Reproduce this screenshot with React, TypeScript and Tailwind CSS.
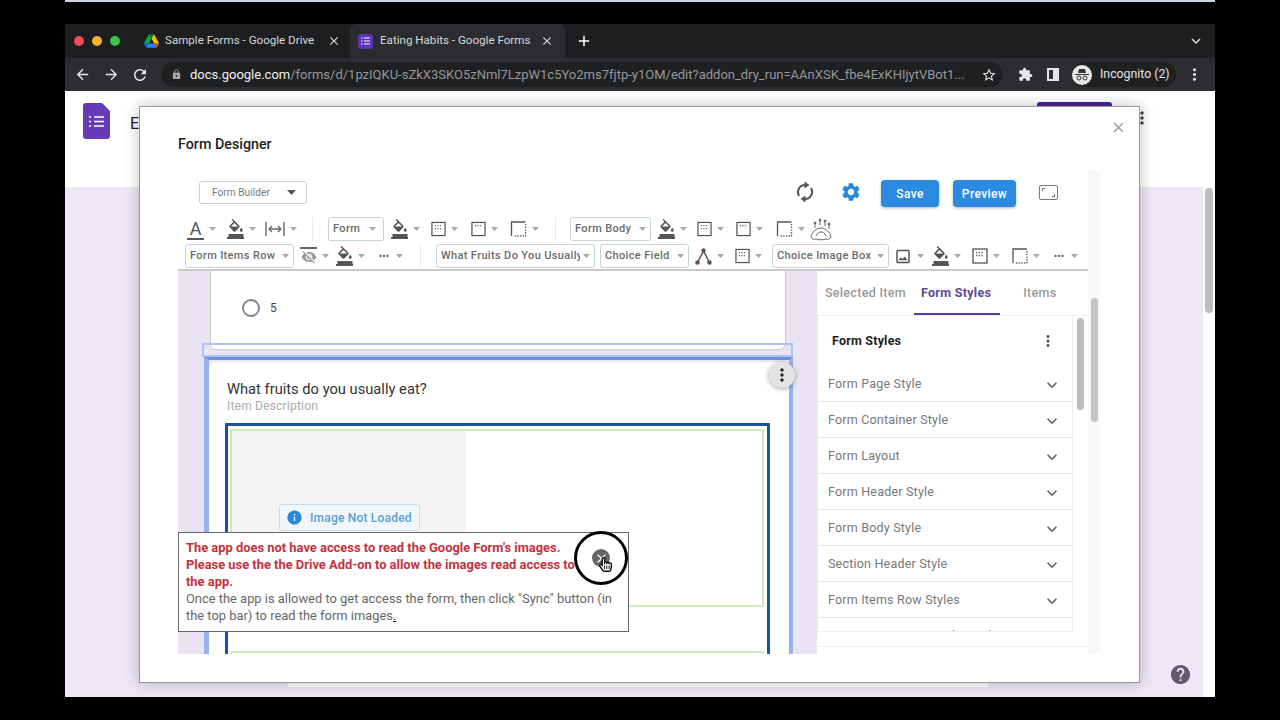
import React from "react";
import {
  MdSettings, MdExpandMore, MdMoreVert, MdExtension, MdStarBorder, MdArrowBack, MdArrowForward,
  MdRefresh, MdLock, MdClose, MdAdd, MdInfo, MdHelp, MdFormatColorFill, MdMoreHoriz, MdVisibilityOff, MdOutlineImage,
} from "react-icons/md";
import { FaHandPointer, FaRegHandPointer } from "react-icons/fa";

const Caret = () => (
  <svg width="7" height="4" viewBox="0 0 7 4" className="ml-[5px] shrink-0"><path d="M0 0h7L3.5 4z" fill="#a8a8a8" /></svg>
);

const Bucket = ({ bar = true }: { bar?: boolean }) => (
  <span className="flex w-[17px] flex-col items-center shrink-0">
    <MdFormatColorFill size={18} color="#555" className="-mt-[1px]" />
    {bar && <span className="h-[2px] w-[17px] bg-[#555]" />}
  </span>
);

const Grid = ({ kind, w = 15 }: { kind: "all" | "top" | "corner"; w?: number }) => (
  <svg width={w} height="16" viewBox="0 0 16 16" className="shrink-0">
    {kind === "corner" ? (
      <>
        <path d="M1 15V1h14" fill="none" stroke="#555" strokeWidth="1.3" />
        <path d="M15 3v12H3" fill="none" stroke="#555" strokeWidth="1.3" strokeDasharray="1.3 1.4" />
      </>
    ) : (
      <>
        <rect x="1" y="1" width="14" height="14" fill="none" stroke="#555" strokeWidth="1.3" />
        <path d="M4 4.5h8" stroke="#666" strokeWidth="1.3" strokeDasharray="1.3 1.4" />
        {kind === "all" && <path d="M4 7.5h8" stroke="#666" strokeWidth="1.3" strokeDasharray="1.3 1.4" />}
      </>
    )}
  </svg>
);

const Dots = () => <MdMoreHoriz size={18} color="#666" className="w-[14px] shrink-0" />;

const Select = ({ label, className }: { label: string; className: string }) => (
  <div className={"flex h-[24px] shrink-0 items-center justify-between rounded-[3px] border border-[#c5d5d5] pl-[4px] " + className}>
    <span className="overflow-hidden whitespace-nowrap text-[11px] font-medium tracking-[0.35px] text-[#6b6b6b]">{label}</span>
    <svg width="7" height="4" viewBox="0 0 7 4" className="ml-[3px] shrink-0"><path d="M0 0h7L3.5 4z" fill="#a8a8a8" /></svg>
  </div>
);

const Divider = ({ className }: { className: string }) => <span className={"h-[24px] w-px shrink-0 bg-[#e8e8e8] " + className} />;

const styles = [
  "Form Page Style",
  "Form Container Style",
  "Form Layout",
  "Form Header Style",
  "Form Body Style",
  "Section Header Style",
  "Form Items Row Styles",
  "Form Items Row Header Style",
];

export default function App() {
  return (
    <div className="relative h-[720px] w-[1280px] overflow-hidden bg-black" style={{ fontFamily: "Roboto, 'Liberation Sans', sans-serif" }}>
      <div className="mx-[65px] h-[2px] bg-[#cdd6e2]" />
      <div className="ml-[65px] mt-[22px] flex h-[673px] w-[1150px] flex-col">
        {/* Tab strip */}
        <div className="flex h-[34px] items-center bg-[#1d1e20] text-[#d8d9db]">
          <span className="ml-[9px] h-[10px] w-[10px] rounded-full bg-[#ee4c56]" />
          <span className="ml-[8px] h-[10px] w-[10px] rounded-full bg-[#f2b135]" />
          <span className="ml-[8px] h-[10px] w-[10px] rounded-full bg-[#35c54a]" />
          <div className="ml-[24px] flex h-full w-[206px] items-center">
            <svg width="15" height="14" viewBox="0 0 87.3 78" className="shrink-0">
              <path d="m6.6 66.85 3.85 6.65c.8 1.4 1.95 2.5 3.3 3.3l13.75-23.8h-27.5c0 1.55.4 3.1 1.2 4.5z" fill="#0066da" />
              <path d="m43.65 25-13.75-23.8c-1.35.8-2.5 1.9-3.3 3.3l-25.4 44a9.06 9.06 0 0 0-1.2 4.5h27.5z" fill="#00ac47" />
              <path d="m73.55 76.8c1.35-.8 2.5-1.9 3.3-3.3l1.6-2.75 7.65-13.25c.8-1.4 1.2-2.95 1.2-4.5h-27.5l5.85 11.5z" fill="#ea4335" />
              <path d="m43.65 25 13.75-23.8c-1.35-.8-2.9-1.2-4.5-1.2h-18.5c-1.6 0-3.15.45-4.5 1.2z" fill="#00832d" />
              <path d="m59.8 53h-32.3l-13.75 23.8c1.35.8 2.9 1.2 4.5 1.2h50.8c1.6 0 3.15-.45 4.5-1.2z" fill="#2684fc" />
              <path d="m73.4 26.5-12.7-22c-.8-1.4-1.95-2.5-3.3-3.3l-13.75 23.8 16.15 28h27.45c0-1.55-.4-3.1-1.2-4.5z" fill="#ffba00" />
            </svg>
            <span className="ml-[6px] w-[150px] whitespace-nowrap text-[11.6px]">Sample Forms - Google Drive</span>
            <MdClose size={14} className="ml-[12px]" />
          </div>
          <div className="flex h-[34px] w-[215px] items-center rounded-t-[6px] bg-[#2b2c2f]">
            <span className="ml-[8px] flex h-[15px] w-[15px] items-center justify-center rounded-[3px] bg-[#5c35b5]">
              <svg width="9" height="8" viewBox="0 0 9 8"><path d="M0 1h1.5M3 1h6M0 4h1.5M3 4h6M0 7h1.5M3 7h6" stroke="#fff" strokeWidth="1.2" /></svg>
            </span>
            <span className="ml-[7px] w-[151px] whitespace-nowrap text-[11.6px]">Eating Habits - Google Forms</span>
            <MdClose size={14} className="ml-[9px]" />
          </div>
          <MdAdd size={18} color="#fff" className="ml-[10px]" />
          <MdExpandMore size={18} color="#d8d9db" className="ml-auto mr-[10px]" />
        </div>
        {/* Address bar */}
        <div className="flex h-[33px] items-center bg-[#2c2d30] text-[#e4e5e7]">
          <MdArrowBack size={17} className="ml-[9px]" />
          <MdArrowForward size={17} className="ml-[12px]" />
          <MdRefresh size={18} className="ml-[11px]" />
          <div className="ml-[12px] flex h-[25px] w-[842px] items-center rounded-full bg-[#1f2022]">
            <MdLock size={11} color="#a8a9ab" className="ml-[10px]" />
            <span className="ml-[8px] w-[775px] overflow-hidden whitespace-nowrap text-[13px]">
              <span className="text-[#f0f0f0]">docs.google.com</span>
              <span className="text-[#96989b]">/forms/d/1pzIQKU-sZkX3SKO5zNml7LzpW1c5Yo2ms7fjtp-y1OM/edit?addon_dry_run=AAnXSK_fbe4ExKHIjytVBot1...</span>
            </span>
            <MdStarBorder size={16} className="ml-[16px] text-[#e4e5e7]" />
          </div>
          <MdExtension size={15} className="ml-[15px]" />
          <span className="ml-[14px] flex h-[13px] w-[12px] items-center justify-end border-2 border-[#e4e5e7]"><span className="h-full w-[4px] bg-[#e4e5e7]" /></span>
          <div className="ml-[13px] flex h-[25px] w-[104px] items-center rounded-full bg-[#1f2022]">
            <span className="flex h-[20px] w-[20px] items-center justify-center rounded-full bg-[#e8e8e8]">
              <svg width="14" height="12" viewBox="0 0 14 12"><path d="M4 0h6l1 4H3zM0 5h14v1H0z" fill="#333" /><circle cx="4" cy="9" r="2" fill="none" stroke="#333" /><circle cx="10" cy="9" r="2" fill="none" stroke="#333" /></svg>
            </span>
            <span className="ml-[8px] whitespace-nowrap text-[12.3px]">Incognito (2)</span>
          </div>
          <MdMoreVert size={19} className="ml-[9px]" />
        </div>
        {/* Page */}
        <div className="relative flex flex-1 bg-[#ede7f6]">
          <div className="flex-1">
            <div className="relative h-[96px] bg-white">
              <svg width="27" height="36" viewBox="0 0 27 36" className="absolute left-[18px] top-[12px]">
                <path d="M3 0h16l8 8v25a3 3 0 0 1-3 3H3a3 3 0 0 1-3-3V3a3 3 0 0 1 3-3z" fill="#673ab7" />
                <path d="M6 14h2M11 14h10M6 18.5h2M11 18.5h10M6 23h2M11 23h10" stroke="#fff" strokeWidth="1.6" />
              </svg>
              <span className="absolute left-[65px] top-[21px] text-[16px] text-[#222]">E</span>
              <div className="absolute left-[972px] top-[11px] h-[10px] w-[75px] rounded-t-[3px] bg-[#4a2596]" />
              <MdMoreVert size={20} color="#444" className="absolute left-[1067px] top-[17px]" />
            </div>
            <div className="absolute bottom-[10px] left-[223px] h-[6px] w-[700px] bg-white" />
            <MdHelp size={23} color="#5f5b6b" className="absolute left-[1104px] top-[572px]" />
          </div>
          <div className="w-[12px] bg-white pl-[2px] pt-[97px]">
            <div className="h-[125px] w-[8px] rounded-full bg-[#bdbdbd]" />
          </div>

          {/* Modal */}
          <div className="absolute left-[74px] top-[15px] flex h-[577px] w-[1001px] flex-col border border-[#9a9a9a] bg-white pl-[38px] shadow-[0_0_14px_rgba(0,0,0,0.25)]">
            <MdClose size={17} color="#9a9a9a" className="absolute right-[12px] top-[12px]" />
            <div className="mt-[27px] h-[20px] text-[14.3px] font-medium leading-[20px] text-[#222]">Form Designer</div>
            <div className="mt-[16px] flex h-[484px]">
              <div className="flex w-[910px] flex-col">
                {/* Toolbar */}
                <div className="h-[101px] shrink-0 border-b-2 border-[#c9c9c9]">
                  <div className="flex h-[47px] items-start pt-[11px]">
                    <div className="ml-[21px] flex h-[23px] w-[108px] items-center rounded-[3px] border border-[#c9cfcf] pl-[12px]">
                      <span className="text-[10px] tracking-[0.1px] text-[#777]">Form Builder</span>
                      <svg width="9" height="5" viewBox="0 0 9 5" className="ml-[17px]"><path d="M0 0h9L4.5 5z" fill="#555" /></svg>
                    </div>
                    <svg width="20" height="22" viewBox="0 0 20 22" className="ml-[488px] shrink-0" fill="none" stroke="#555" strokeWidth="2">
                      <path d="M10 4a7.2 7.2 0 0 0-6 11" />
                      <path d="M10 18a7.2 7.2 0 0 0 6-11" />
                      <path d="M9.5 0.5l5 3.5-5 3.5zM10.5 14.5l-5 3.5 5 3.5z" fill="#555" stroke="none" />
                    </svg>
                    <MdSettings size={22} color="#2a87d8" className="ml-[25px]" />
                    <button className="ml-[19px] -mt-[1px] h-[27px] w-[58px] rounded-[4px] bg-[#2a8be0] text-[12px] font-medium tracking-[0.4px] text-white shadow-[0_1px_3px_rgba(0,0,0,0.3)]">Save</button>
                    <button className="ml-[14px] -mt-[1px] h-[27px] w-[63px] rounded-[4px] bg-[#2a8be0] text-[12px] font-medium tracking-[0.4px] text-white shadow-[0_1px_3px_rgba(0,0,0,0.3)]">Preview</button>
                    <span className="ml-[23px] mt-[4px] flex h-[15px] w-[19px] items-center justify-center rounded-[2px] border border-[#777]">
                      <svg width="13" height="9" viewBox="0 0 13 9"><path d="M.5 3V.5H3M12.5 6v2.5H10" fill="none" stroke="#777" /></svg>
                    </span>
                  </div>
                  <div className="flex h-[24px] items-center pl-[9px]">
                    <span className="flex w-[17px] shrink-0 flex-col items-center">
                      <span className="text-[18px] font-normal leading-[19px] text-[#555]">A</span>
                      <span className="h-[2px] w-[17px] bg-[#555]" />
                    </span>
                    <Caret />
                    <span className="ml-[11px]"><Bucket /></span>
                    <Caret />
                    <span className="ml-[9px] flex w-[20px] shrink-0 items-center justify-between text-[#666]">
                      <svg width="20" height="14" viewBox="0 0 20 14"><path d="M1 0v14M19 0v14M4 7h12M4 7l3-3M4 7l3 3M16 7l-3-3M16 7l-3 3" fill="none" stroke="#666" strokeWidth="1.4" /></svg>
                    </span>
                    <Caret />
                    <Divider className="ml-[15px]" />
                    <Select label="Form" className="ml-[15px] w-[56px] pr-[7px]" />
                    <span className="ml-[7px]"><Bucket /></span>
                    <Caret />
                    <span className="ml-[11px]"><Grid kind="all" /></span>
                    <Caret />
                    <span className="ml-[13px]"><Grid kind="top" /></span>
                    <Caret />
                    <span className="ml-[12px]"><Grid kind="corner" w={17} /></span>
                    <Caret />
                    <Divider className="ml-[16px]" />
                    <Select label="Form Body" className="ml-[14px] w-[81px] pr-[4px]" />
                    <span className="ml-[7px]"><Bucket /></span>
                    <Caret />
                    <span className="ml-[10px]"><Grid kind="all" /></span>
                    <Caret />
                    <span className="ml-[12px]"><Grid kind="top" /></span>
                    <Caret />
                    <span className="ml-[13px]"><Grid kind="corner" w={17} /></span>
                    <Caret />
                    <svg width="22" height="24" viewBox="0 0 22 24" className="ml-[5px] shrink-0" fill="none" stroke="#666" strokeWidth="1">
                      <path d="M1 20c1-5 5-9 10-9s9 4 10 9c-1 2-3 3-5 2-3 1-7 1-10 0-2 1-4 0-5-2z" />
                      <path d="M6 19c1-3 3-4 5-4s4 1 5 4M5 11V6M10 8V2M15 9V3M19 12V6" />
                      <circle cx="5" cy="6" r="1" fill="#666" /><circle cx="10" cy="3" r="1" fill="#666" /><circle cx="15" cy="4" r="1" fill="#666" /><circle cx="19" cy="7" r="1" fill="#666" />
                    </svg>
                  </div>
                  <div className="mt-[3px] flex h-[24px] items-center pl-[7px]">
                    <Select label="Form Items Row" className="w-[109px] pr-[4px]" />
                    <span className="ml-[6px] flex w-[17px] shrink-0 flex-col items-center">
                      <span className="h-[2px] w-[17px] bg-[#666]" />
                      <MdVisibilityOff size={16} color="#999" />
                    </span>
                    <Caret />
                    <span className="ml-[7px]"><Bucket /></span>
                    <Caret />
                    <span className="ml-[12px]"><Dots /></span>
                    <Caret />
                    <Divider className="ml-[17px]" />
                    <Select label="What Fruits Do You Usually" className="ml-[15px] w-[159px] pr-[4px]" />
                    <Select label="Choice Field" className="ml-[5px] w-[89px] pr-[4px]" />
                    <svg width="17" height="17" viewBox="0 0 17 17" className="ml-[6px] shrink-0">
                      <path d="M2.5 14.5L8.5 3l6 11.5" fill="none" stroke="#555" strokeWidth="1.5" />
                      <circle cx="2.5" cy="14.5" r="2.2" fill="#555" /><circle cx="8.5" cy="2.5" r="2.2" fill="#555" /><circle cx="14.5" cy="14.5" r="2.2" fill="#555" />
                    </svg>
                    <Caret />
                    <span className="ml-[11px]"><Grid kind="all" /></span>
                    <Caret />
                    <Select label="Choice Image Box" className="ml-[10px] w-[117px] pr-[4px]" />
                    <MdOutlineImage size={19} color="#555" className="ml-[5px] w-[18px] shrink-0" />
                    <Caret />
                    <span className="ml-[8px]"><Bucket /></span>
                    <Caret />
                    <span className="ml-[11px]"><Grid kind="all" w={16} /></span>
                    <Caret />
                    <span className="ml-[12px]"><Grid kind="corner" w={16} /></span>
                    <Caret />
                    <span className="ml-[12px]"><Dots /></span>
                    <Caret />
                  </div>
                </div>
                {/* Main */}
                <div className="flex min-h-0 flex-1">
                  <div className="w-[639px] overflow-hidden bg-[#e9e3f3] pl-[32px]">
                    <div className="flex h-[72px] w-[576px] items-center border-x border-[#c9c9c9] bg-white pl-[31px] pt-[2px]">
                      <span className="h-[18px] w-[18px] rounded-full border-2 border-[#888]" />
                      <span className="ml-[10px] text-[12px] text-[#444]">5</span>
                    </div>
                    <div className="-ml-[8px] h-[14px] w-[591px] border-2 border-[#a9c4f5] px-[6px]">
                      <div className="h-[5px] rounded-b-[5px] border-x border-b border-[#c9c9c9] bg-white" />
                    </div>
                    <div className="-ml-[6px] w-[589px] border-l-[5px] border-r-[4px] border-t-[3px] border-[#94b3ee] border-t-[#6b90de] pt-[2px]">
                      <div className="relative h-[292px] rounded-t-[6px] bg-white pl-[18px]">
                        <span className="absolute -right-[6px] top-0 flex h-[26px] w-[26px] items-center justify-center rounded-full bg-[#e3e3e3] shadow-[0_1px_5px_rgba(0,0,0,0.35)]">
                          <MdMoreVert size={20} color="#222" />
                        </span>
                        <div className="pt-[17px] text-[14.7px] leading-[20px] text-[#333]">What fruits do you usually eat?</div>
                        <div className="text-[12px] leading-[14px] tracking-[0.2px] text-[#aaa]">Item Description</div>
                        <div className="ml-[-2px] mt-[10px] h-[240px] w-[545px] border-x-[3px] border-t-[3px] border-[#1c52a6] pl-[2px] pr-[3px] pt-[3px]">
                          <div className="flex h-[178px] border-2 border-[#cdeabf]">
                            <div className="h-full w-[234px] bg-[#f3f3f3] pl-[47px] pt-[73px]">
                              <div className="flex h-[27px] w-[141px] items-center rounded-[3px] border border-[#c6dceb] bg-[#f1f6fa] pl-[6px]">
                                <MdInfo size={17} color="#2a87e0" />
                                <span className="ml-[7px] text-[12px] font-medium tracking-[0.2px] text-[#5aa0d0]">Image Not Loaded</span>
                              </div>
                            </div>
                          </div>
                          <div className="mt-[44px] h-[10px] border-x-2 border-t-2 border-[#cdeabf]" />
                        </div>
                      </div>
                    </div>
                  </div>
                  {/* Right panel */}
                  <div className="flex w-[271px] flex-col bg-white">
                    <div className="relative flex h-[45px] shrink-0 items-center border-b border-[#eeeeee] text-[12.5px] font-medium tracking-[0.3px]">
                      <span className="ml-[8px] whitespace-nowrap text-[#999]">Selected Item</span>
                      <span className="ml-[15px] whitespace-nowrap font-bold text-[#5e4a96]">Form Styles</span>
                      <span className="ml-[32px] text-[#999]">Items</span>
                      <span className="absolute bottom-0 left-[97px] h-[2px] w-[86px] bg-[#5b3aa0]" />
                    </div>
                    <div className="flex h-[331px] shrink-0 border-b border-[#eeeeee]">
                      <div className="h-[316px] w-[256px] overflow-hidden border-x border-b border-[#eeeeee]">
                        <div className="flex h-[50px] items-center pl-[14px] pr-[15px]">
                          <span className="flex-1 text-[12.5px] font-bold tracking-[0.2px] text-[#222]">Form Styles</span>
                          <MdMoreVert size={18} color="#555" />
                        </div>
                        {styles.map((s) => (
                          <div key={s} className="flex h-[36px] items-center border-b border-[#e3e3e3] pl-[10px] pr-[10px] pt-[2px]">
                            <span className="flex-1 text-[12.5px] tracking-[0.2px] text-[#777]">{s}</span>
                            <MdExpandMore size={20} color="#666" />
                          </div>
                        ))}
                      </div>
                      <div className="ml-[4px] mt-[2px] h-[92px] w-[7px] rounded-full bg-[#bdbdbd]" />
                    </div>
                  </div>
                </div>
              </div>
              <div className="h-full w-[12px] bg-[#f8f8f8] pl-[3px] pt-[128px]">
                <div className="h-[124px] w-[7px] rounded-full bg-[#c4c4c4]" />
              </div>
            </div>

            {/* Alert */}
            <div className="absolute left-[38px] top-[425px] h-[100px] w-[451px] border border-[#666] bg-white px-[7px] pt-[7px] text-[12.9px] leading-[16.9px]">
              <div className="font-bold text-[#c5303e]">
                The app does not have access to read the Google Form's images.
                <br />
                Please use the the Drive Add-on to allow the images read access to
                <br />
                the app.
              </div>
              <div className="text-[#666]">
                Once the app is allowed to get access the form, then click "Sync" button (in
                <br />
                the top bar) to read the form images<span className="text-[#222] underline">.</span>
              </div>
              <span className="absolute left-[395px] top-[-2px] flex h-[54px] w-[54px] items-center justify-center rounded-full border-[3px] border-black bg-white">
                <span className="flex h-[18px] w-[18px] items-center justify-center rounded-full bg-[#666]">
                  <MdClose size={15} color="#fff" />
                </span>
                <FaHandPointer size={15} color="#fff" className="absolute left-[21px] top-[23px]" />
                <FaRegHandPointer size={15} color="#111" className="absolute left-[21px] top-[23px]" />
              </span>
            </div>
          </div>
        </div>
      </div>
    </div>
  );
}
